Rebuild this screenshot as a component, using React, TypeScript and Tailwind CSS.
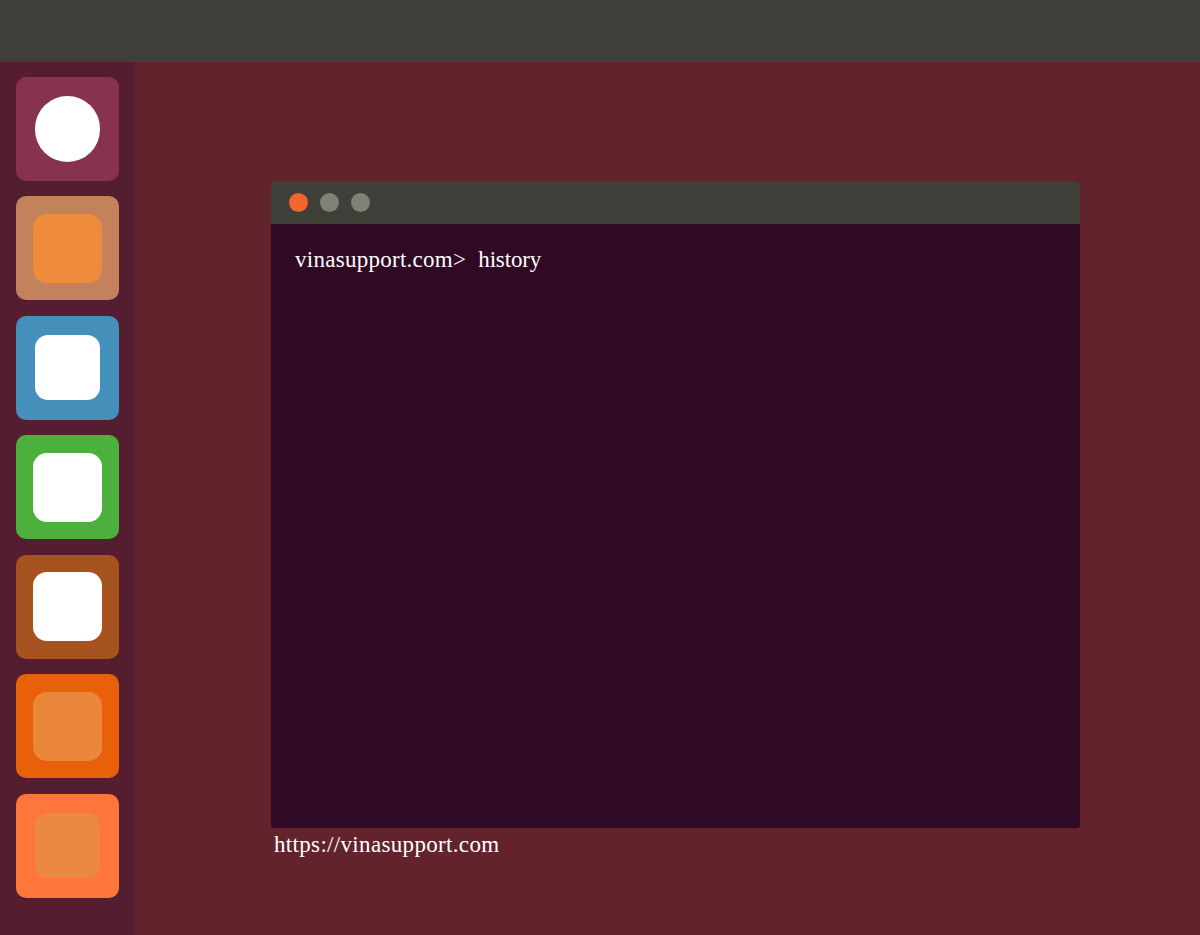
const dockItems = [
  { tile: "bg-[#87324f]", inner: "w-[65.5px] h-[65.5px] rounded-full bg-white" },
  { tile: "bg-[#c4825c]", inner: "w-[69px] h-[69px] rounded-[14px] bg-[#ee8b3d]" },
  { tile: "bg-[#458fbb]", inner: "w-[65px] h-[65px] rounded-[13px] bg-white" },
  { tile: "bg-[#4cb03c]", inner: "w-[69px] h-[69px] rounded-[14px] bg-white" },
  { tile: "bg-[#a75320]", inner: "w-[69px] h-[69px] rounded-[14px] bg-white" },
  { tile: "bg-[#e8610a]", inner: "w-[69px] h-[69px] rounded-[14px] bg-[#eb873b]" },
  { tile: "bg-[#ff763a]", inner: "w-[65px] h-[65px] rounded-[13px] bg-[#ea893f]" },
];

export default function App() {
  return (
    <div className="h-[935px] w-[1200px] overflow-hidden flex flex-col bg-[#63232c] font-['Liberation_Serif',serif] text-white">
      <div className="h-[62px] shrink-0 bg-[#3e3f39]" />
      <div className="flex flex-1">
        <div className="w-[135px] shrink-0 bg-[#541d30] pt-[14.75px] pl-[15.6px] flex flex-col gap-[15.5px]">
          {dockItems.map((item, i) => (
            <div key={i} className={`w-[103.8px] h-[104px] rounded-[10px] flex items-center justify-center ${item.tile}`}>
              <div className={item.inner} />
            </div>
          ))}
        </div>
        <div className="pl-[136px] pt-[119px]">
          <div className="w-[809px] h-[647px] rounded-[3px] overflow-hidden flex flex-col bg-[#300a24]">
            <div className="h-[43px] shrink-0 bg-[#3e3f39] flex items-center gap-[12.5px] pl-[18px]">
              <div className="w-[18.5px] h-[18.5px] rounded-full bg-[#f2652c]" />
              <div className="w-[18.5px] h-[18.5px] rounded-full bg-[#7f8175]" />
              <div className="w-[18.5px] h-[18.5px] rounded-full bg-[#7f8175]" />
            </div>
            <div className="pl-[24px] pt-[21px] text-[23px] leading-[30px] whitespace-pre">
              <span className="tracking-[0.27px]">vinasupport.com&gt;  </span>
              <span className="tracking-[-0.15px]">history</span>
            </div>
          </div>
          <div className="pl-[3px] pt-[2px] text-[23px] leading-[30px] tracking-[0.33px]">https://vinasupport.com</div>
        </div>
      </div>
    </div>
  );
}
